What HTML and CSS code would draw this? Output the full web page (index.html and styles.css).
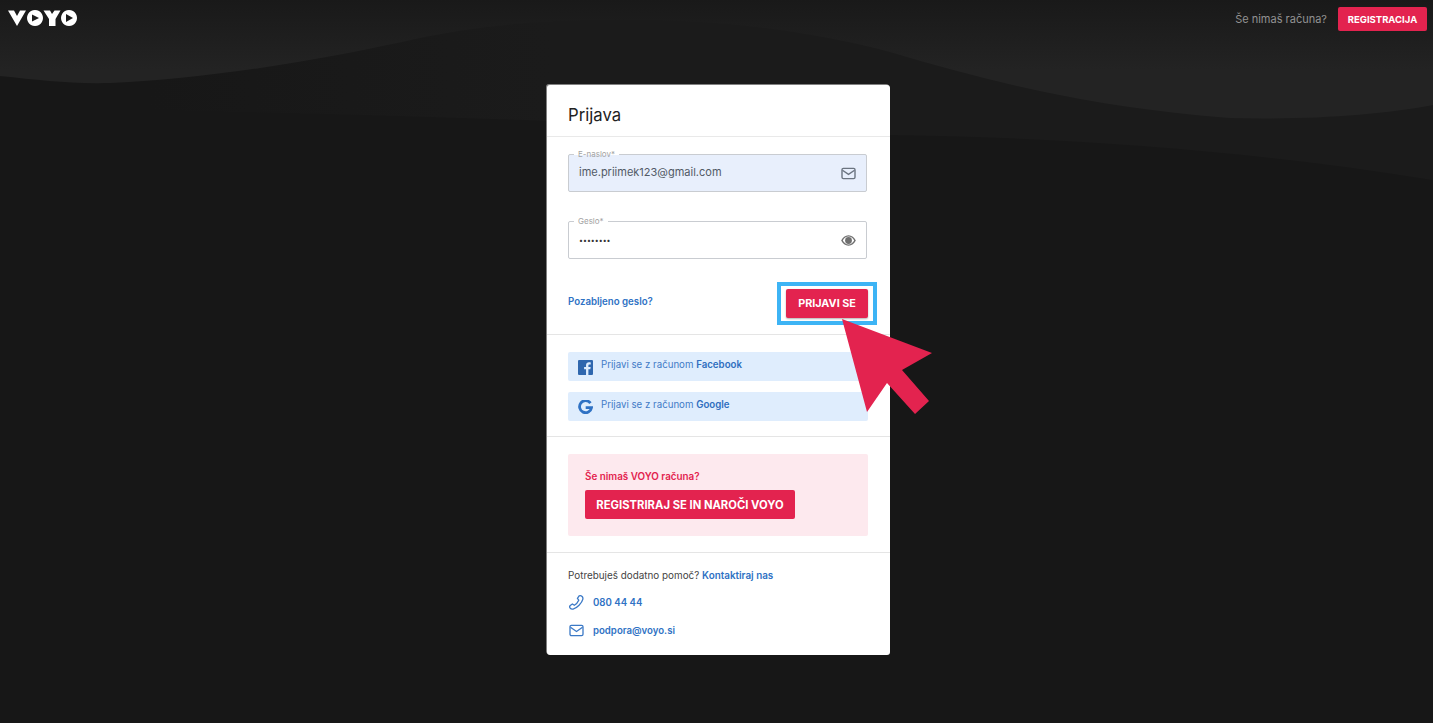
FILE: index.html
```html
<!DOCTYPE html>
<html lang="sl">
<head>
<meta charset="utf-8">
<title>Prijava - VOYO</title>
<link rel="stylesheet" href="styles.css">
</head>
<body>
<div class="page">
  <svg class="waves" viewBox="0 0 1433 723" width="1433" height="723" aria-hidden="true">
    <defs>
      <linearGradient id="fade" gradientUnits="userSpaceOnUse" x1="0" y1="0" x2="0" y2="70">
        <stop offset="0" stop-color="#191919"/>
        <stop offset="1" stop-color="#232323"/>
      </linearGradient>
      <linearGradient id="back" gradientUnits="userSpaceOnUse" x1="150" y1="0" x2="550" y2="0">
        <stop offset="0" stop-color="#171717"/>
        <stop offset="1" stop-color="#1b1b1b"/>
      </linearGradient>
    </defs>
    <path fill="url(#back)" d="M150 110C400 115 700 125 890 135C1060 137 1250 150 1433 180V0H150Z"/>
    <path fill="url(#fade)" d="M0 76C40 80 70 84 110 83C220 78 330 58 420 38C480 26 530 21 600 20C700 18 800 28 890 52C1000 85 1100 108 1230 118C1310 120 1380 115 1433 105V0H0Z"/>
  </svg>

  <header class="topbar">
    <svg class="logo" viewBox="0 0 69 16" width="69" height="16" aria-label="VOYO">
      <path fill="#fff" d="M0 0.500H6L9 6 12 0.500H18L9 16Z"/>
      <path fill="#fff" fill-rule="evenodd" d="M27 0a8 8 0 1 0 0.010 0ZM24 4.500L31 8 24 11.500Z"/>
      <path fill="#fff" d="M35.500 0.500H42L44 4 46.500 0.500H52.500L47.500 9V16H41V9Z"/>
      <path fill="#fff" fill-rule="evenodd" d="M61 0a8 8 0 1 0 0.010 0ZM58 4L65 8 58 12Z"/>
    </svg>
    <div class="topbar-right">
      <span class="topbar-note">Še nimaš računa?</span>
      <a class="btn btn-small" href="#">REGISTRACIJA</a>
    </div>
  </header>

  <main class="card">
    <h1 class="card-title">Prijava</h1>

    <section class="section form">
      <div class="field field-filled">
        <span class="field-label">E-naslov*</span>
        <span class="field-value">ime.priimek123@gmail.com</span>
        <svg class="field-icon" viewBox="0 0 16 14" width="15" height="13" fill="none" stroke="#6b7480" stroke-width="1.500">
          <rect x="1" y="1.500" width="14" height="11" rx="1.500"/>
          <path d="M1.500 3.500L8 8 14.500 3.500"/>
        </svg>
      </div>
      <div class="field">
        <span class="field-label">Geslo*</span>
        <span class="field-value field-dots">••••••••</span>
        <svg class="field-icon" viewBox="0 0 16 12" width="15" height="11">
          <path fill="#6f6f6f" fill-rule="evenodd" d="M8 0.300C4.500 0.300 1.500 2.700 0 6 1.500 9.300 4.500 11.700 8 11.700S14.500 9.300 16 6C14.500 2.700 11.500 0.300 8 0.300ZM8 1.700C10.600 1.700 12.900 3.400 14.200 6 12.900 8.600 10.600 10.300 8 10.300S3.100 8.600 1.800 6C3.100 3.400 5.400 1.700 8 1.700Z"/>
          <circle cx="8" cy="6" r="3.700" fill="#6f6f6f"/>
        </svg>
      </div>
      <div class="form-actions">
        <a class="link link-forgot" href="#">Pozabljeno geslo?</a>
        <span class="highlight"><a class="btn btn-login" href="#">PRIJAVI SE</a></span>
      </div>
    </section>

    <section class="section social">
      <a class="social-btn" href="#">
        <svg class="social-icon" viewBox="0 0 14 14" width="15" height="15">
          <path fill="#2f67ae" d="M1 0H13a1 1 0 0 1 1 1V13a1 1 0 0 1-1 1H9.700V8.600H11.500L11.800 6.500H9.700V5.200C9.700 4.600 9.900 4.200 10.700 4.200H11.900V2.300C11.600 2.300 11 2.200 10.200 2.200 8.600 2.200 7.500 3.200 7.500 5V6.500H5.700V8.600H7.500V14H1A1 1 0 0 1 0 13V1A1 1 0 0 1 1 0Z"/>
        </svg>
        <span class="social-text">Prijavi se z računom <b>Facebook</b></span>
      </a>
      <a class="social-btn" href="#">
        <svg class="social-icon" viewBox="0 0 16 16" width="15" height="15" fill="none" stroke="#2f72c4" stroke-width="3">
          <path d="M13.300 3.400A6.400 6.400 0 1 0 14.400 8.200H8.200"/>
        </svg>
        <span class="social-text">Prijavi se z računom <b>Google</b></span>
      </a>
    </section>

    <section class="section signup">
      <div class="signup-box">
        <p class="signup-title">Še nimaš VOYO računa?</p>
        <a class="btn btn-signup" href="#">REGISTRIRAJ SE IN NAROČI VOYO</a>
      </div>
    </section>

    <section class="help">
      <p class="help-line">Potrebuješ dodatno pomoč? <a class="link" href="#">Kontaktiraj nas</a></p>
      <a class="contact" href="#">
        <svg class="contact-icon" viewBox="0 0 16 16" width="15" height="15" fill="none" stroke="#3b79c6" stroke-width="1.400" stroke-linejoin="round">
          <path d="M10.800 1C12 0.500 13 0.700 14 1.600 15 2.600 15 3.600 14.700 4.700 13.800 8.500 8.500 14 4.400 15 3.200 15.300 2 15 1.200 14 0.400 13 0.600 12 1.300 11.200L3.600 9.600 5.700 11C7.700 9.700 9.500 7.500 10.400 5.500L9 3.600Z"/>
        </svg>
        <span>080 44 44</span>
      </a>
      <a class="contact" href="#">
        <svg class="contact-icon" viewBox="0 0 16 14" width="15" height="13" fill="none" stroke="#3b79c6" stroke-width="1.400">
          <rect x="1" y="1.500" width="14" height="11" rx="1.500"/>
          <path d="M1.500 3.500L8 8 14.500 3.500"/>
        </svg>
        <span>podpora@voyo.si</span>
      </a>
    </section>
  </main>

  <svg class="pointer" viewBox="0 0 95 98" width="95" height="98" aria-hidden="true">
    <path fill="#e3234f" d="M2 1L92 35 62 52 89 83 75 96 47 65 27 94Z"/>
  </svg>
</div>
</body>
</html>
```

FILE: styles.css
```css
* { box-sizing: border-box; }
html, body { margin: 0; padding: 0; }
body {
  font-family: Inter, "Liberation Sans", sans-serif;
  background: #171717;
  color: #333;
}
a { text-decoration: none; }
p, h1 { margin: 0; }

.page {
  position: relative;
  width: 1433px;
  height: 723px;
  overflow: hidden;
}
.waves { position: absolute; left: 0; top: 0; }

.topbar {
  position: relative;
  height: 38px;
  padding: 7px 6px 0 8px;
  display: flex;
  justify-content: space-between;
  align-items: flex-start;
}
.logo { margin-top: 3px; display: block; }
.topbar-right { display: flex; align-items: center; gap: 11px; }
.topbar-note { font-size: 11px; color: #929292; }

.btn {
  display: flex;
  align-items: center;
  justify-content: center;
  background: #e3234f;
  color: #fff;
  font-weight: 700;
  border-radius: 2px;
}
.btn-small { width: 89px; height: 24px; font-size: 9.500px; }
.btn-login { width: 82px; height: 29px; font-size: 10.800px; box-shadow: 0 1px 2px rgba(0,0,0,.3); }
.btn-signup { width: 210px; height: 29px; font-size: 11.250px; }

.card {
  position: relative;
  width: 343px;
  height: 570px;
  margin: 47px 0 0 547px;
  background: #fff;
  border-radius: 3px;
  box-shadow: -1px -1px 0 0 rgba(255, 255, 255, .45);
  display: flex;
  flex-direction: column;
}
.card-title {
  height: 52px;
  padding: 20px 21px 0;
  font-size: 16.700px;
  line-height: 20px;
  font-weight: 400;
  color: #222;
  border-bottom: 1px solid #e9e9e9;
}
.section { padding: 0 22px 0 21px; border-bottom: 1px solid #e5e5e5; }

.form { height: 198px; padding-top: 17px; }
.field {
  position: relative;
  width: 299px;
  height: 38px;
  margin-bottom: 29px;
  padding: 0 10px;
  display: flex;
  align-items: center;
  justify-content: space-between;
  border: 1px solid #c9ccd1;
  border-radius: 2px;
}
.field-filled { background: #e8effc; }
.field-label {
  position: absolute;
  left: 5px;
  top: -6px;
  padding: 0 4px;
  font-size: 8px;
  line-height: 10px;
  color: #a3a3a3;
  background: linear-gradient(#fff 60%, transparent 60%);
}
.field-value { font-size: 11px; color: #525a66; margin-top: -3px; }
.field-dots { font-size: 7px; letter-spacing: 0; color: #333; margin-top: 0; }
.field-icon { display: block; margin-right: 0; }

.form-actions {
  display: flex;
  align-items: center;
  justify-content: space-between;
  margin-top: -6px;
  width: 310px;
}
.link { color: #2f72c4; font-weight: 600; }
.link-forgot { font-size: 9.700px; margin-bottom: 5px; }
.highlight {
  display: block;
  padding: 3px 5px;
  border: 4px solid #3db4f5;
  background: #fff;
  margin-right: 1px;
}

.social { height: 102px; padding-top: 17px; display: flex; flex-direction: column; gap: 11px; }
.social-btn {
  height: 29px;
  width: 300px;
  padding: 0 10px;
  background: #dfedfd;
  border-radius: 2px;
  display: flex;
  align-items: center;
  gap: 8px;
  color: #3f7bc7;
}
.social-icon { display: block; margin-top: 1px; }
.social-text { font-size: 9.700px; margin-top: -5px; }
.social-text b { font-weight: 600; color: #2f6fbf; }

.signup { height: 116px; padding-top: 17px; }
.signup-box {
  width: 300px;
  height: 82px;
  padding: 16px 17px 0;
  background: #fde9ee;
  border-radius: 2px;
}
.signup-title { font-size: 9.850px; line-height: 12px; font-weight: 600; color: #e3234f; margin-bottom: 8px; }

.help { padding: 16px 21px 0; }
.help-line { font-size: 9.900px; line-height: 13px; color: #444; }
.contact {
  display: flex;
  align-items: center;
  gap: 9px;
  height: 15px;
  margin-top: 13px;
  padding-left: 1px;
  font-size: 9.650px;
  font-weight: 600;
  color: #2f72c4;
}
.contact-icon { display: block; }

.pointer { position: absolute; left: 840px; top: 318px; }
```
